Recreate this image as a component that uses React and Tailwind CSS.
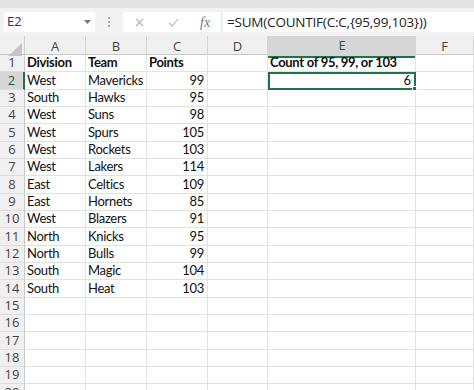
import React from 'react';

const columns = ['A', 'B', 'C', 'D', 'E', 'F'];

const rows = [
    ['Division', 'Team', 'Points'],
    ['West', 'Mavericks', 99],
    ['South', 'Hawks', 95],
    ['West', 'Suns', 98],
    ['West', 'Spurs', 105],
    ['West', 'Rockets', 103],
    ['West', 'Lakers', 114],
    ['East', 'Celtics', 109],
    ['East', 'Hornets', 85],
    ['West', 'Blazers', 91],
    ['North', 'Knicks', 95],
    ['North', 'Bulls', 99],
    ['South', 'Magic', 104],
    ['South', 'Heat', 103],
    [], [], [], [], [], [], [],
];

const gridCols = 'grid grid-cols-[25px_61px_61px_61px_60px_148px_58px]';

const Cell = ({ children, right, bold, className = '' }) => (
    <div
        className={`h-[17.33px] border-r border-b border-[#e2e2e2] flex items-center overflow-visible whitespace-nowrap text-[13px] tracking-[-0.3px] text-[#111] ${
            right ? 'justify-end pr-[3px]' : 'pl-[2px]'
        } ${bold ? 'font-bold' : ''} ${className}`}
    >
        {children}
    </div>
);

const App = () => {
    return (
        <div className="w-[474px] h-[390px] overflow-hidden bg-white font-['Lato',sans-serif]">
            {/* top strip */}
            <div className="h-[8px] bg-[#e4e4e4]" />

            {/* formula bar */}
            <div className="h-[28px] bg-[#f2f2f2] flex items-center">
                <div className="ml-[4px] w-[91px] h-[20px] bg-white flex items-center justify-between pl-[3px] pr-[4px]">
                    <span className="text-[13px] text-[#333] font-['Open_Sans',sans-serif]">E2</span>
                    <svg width="7" height="4" viewBox="0 0 7 4">
                        <path d="M0 0h7L3.5 4z" fill="#777" />
                    </svg>
                </div>
                <div className="w-[28px] flex flex-col items-center gap-[2px]">
                    <span className="w-[2px] h-[2px] bg-[#aaa]" />
                    <span className="w-[2px] h-[2px] bg-[#aaa]" />
                    <span className="w-[2px] h-[2px] bg-[#aaa]" />
                </div>
                <div className="w-[97px] h-[20px] bg-white flex items-center">
                    <svg className="ml-[12px]" width="9" height="9" viewBox="0 0 9 9">
                        <path d="M1 1l7 7M8 1L1 8" stroke="#b5b5b5" strokeWidth="1.1" fill="none" />
                    </svg>
                    <svg className="ml-[24px]" width="11" height="9" viewBox="0 0 11 9">
                        <path d="M1 5l3 3 6-7" stroke="#b5b5b5" strokeWidth="1.1" fill="none" />
                    </svg>
                    <span className="ml-[21px] text-[14px] italic text-[#777] font-['Liberation_Serif',serif]">fx</span>
                </div>
                <div className="ml-[3px] flex-1 h-[20px] bg-white flex items-center pl-[4px]">
                    <span className="text-[13.5px] text-[#222] font-['Open_Sans',sans-serif] tracking-[-0.2px]">
                        =SUM(COUNTIF(C:C,{'{'}95,99,103{'}'}))
                    </span>
                </div>
            </div>

            {/* column headers */}
            <div className={`${gridCols} h-[19px] bg-[#f0f0f0] border-b border-[#c8c8c8]`}>
                <div className="relative border-r border-[#d0d0d0]">
                    <svg className="absolute right-[2px] bottom-[2px]" width="14" height="13" viewBox="0 0 14 13">
                        <path d="M14 0v13H0z" fill="#c4c4c4" />
                    </svg>
                </div>
                {columns.map((c) => (
                    <div
                        key={c}
                        className={`flex items-center justify-center text-[13px] font-['Open_Sans',sans-serif] ${
                            c === 'E'
                                ? 'bg-[#d6d6d6] text-[#1f5c3b] border-b-2 border-[#217346]'
                                : 'text-[#444] border-r border-[#d4d4d4]'
                        }`}
                    >
                        {c}
                    </div>
                ))}
            </div>

            {/* rows */}
            {rows.map((row, i) => {
                const n = i + 1;
                return (
                    <div key={n} className={gridCols}>
                        <div
                            className={`h-[17.33px] flex items-center justify-center text-[13px] font-['Open_Sans',sans-serif] border-b border-[#dcdcdc] ${
                                n === 2
                                    ? 'bg-[#d6d6d6] text-[#1f5c3b] border-r-2 border-r-[#217346]'
                                    : 'bg-[#f0f0f0] text-[#444] border-r border-r-[#c8c8c8]'
                            }`}
                        >
                            {n}
                        </div>
                        <Cell bold={n === 1}>{row[0]}</Cell>
                        <Cell bold={n === 1}>{row[1]}</Cell>
                        <Cell bold={n === 1} right={n !== 1}>{row[2]}</Cell>
                        <Cell />
                        {n === 1 && <Cell bold>Count of 95, 99, or 103</Cell>}
                        {n === 2 && (
                            <div className="relative h-[17.33px] border-2 border-[#217346] flex items-center justify-end pr-[3px] text-[13px] text-[#111]">
                                6
                                <span className="absolute -right-[3px] -bottom-[3px] w-[5px] h-[5px] bg-[#217346] border border-white" />
                            </div>
                        )}
                        {n > 2 && <Cell />}
                        <Cell />
                    </div>
                );
            })}
        </div>
    );
};

export default App;
